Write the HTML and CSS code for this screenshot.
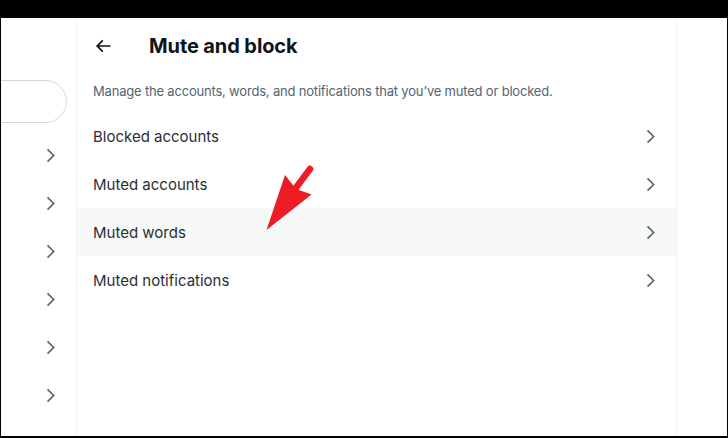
FILE: index.html
```html
<!DOCTYPE html>
<html lang="en" dir="ltr">

<head>
  <meta charset="utf-8">
  <meta name="viewport" content="width=device-width, initial-scale=1.0">
  <title>Mute and block</title>

  <link rel="stylesheet" href="styles.css">
</head>

<body>
  <div class="frame">

    <div class="side">
      <div class="search"></div>
      <div class="side-row"><svg class="chev" viewBox="0 0 24 24"><path d="M14.586 12L7.543 4.96l1.414-1.42L17.414 12l-8.457 8.46-1.414-1.42L14.586 12z"/></svg></div>
      <div class="side-row"><svg class="chev" viewBox="0 0 24 24"><path d="M14.586 12L7.543 4.96l1.414-1.42L17.414 12l-8.457 8.46-1.414-1.42L14.586 12z"/></svg></div>
      <div class="side-row"><svg class="chev" viewBox="0 0 24 24"><path d="M14.586 12L7.543 4.96l1.414-1.42L17.414 12l-8.457 8.46-1.414-1.42L14.586 12z"/></svg></div>
      <div class="side-row"><svg class="chev" viewBox="0 0 24 24"><path d="M14.586 12L7.543 4.96l1.414-1.42L17.414 12l-8.457 8.46-1.414-1.42L14.586 12z"/></svg></div>
      <div class="side-row"><svg class="chev" viewBox="0 0 24 24"><path d="M14.586 12L7.543 4.96l1.414-1.42L17.414 12l-8.457 8.46-1.414-1.42L14.586 12z"/></svg></div>
      <div class="side-row"><svg class="chev" viewBox="0 0 24 24"><path d="M14.586 12L7.543 4.96l1.414-1.42L17.414 12l-8.457 8.46-1.414-1.42L14.586 12z"/></svg></div>
    </div>

    <div class="main">
      <div class="header">
        <div class="back">
          <svg class="arrow" viewBox="0 0 24 24"><path d="M7.414 13l5.043 5.04-1.414 1.42L3.586 12l7.457-7.46 1.414 1.42L7.414 11H21v2H7.414z"/></svg>
        </div>
        <h2>Mute and block</h2>
      </div>

      <p class="intro">Manage the accounts, words, and notifications that you’ve muted or blocked.</p>

      <div class="row">
        <span>Blocked accounts</span>
        <svg class="chev" viewBox="0 0 24 24"><path d="M14.586 12L7.543 4.96l1.414-1.42L17.414 12l-8.457 8.46-1.414-1.42L14.586 12z"/></svg>
      </div>
      <div class="row">
        <span>Muted accounts</span>
        <svg class="chev" viewBox="0 0 24 24"><path d="M14.586 12L7.543 4.96l1.414-1.42L17.414 12l-8.457 8.46-1.414-1.42L14.586 12z"/></svg>
      </div>
      <div class="row hover">
        <span>Muted words</span>
        <svg class="chev" viewBox="0 0 24 24"><path d="M14.586 12L7.543 4.96l1.414-1.42L17.414 12l-8.457 8.46-1.414-1.42L14.586 12z"/></svg>
      </div>
      <div class="row">
        <span>Muted notifications</span>
        <svg class="chev" viewBox="0 0 24 24"><path d="M14.586 12L7.543 4.96l1.414-1.42L17.414 12l-8.457 8.46-1.414-1.42L14.586 12z"/></svg>
      </div>
    </div>

    <div class="aside"></div>
  </div>

  <!-- red annotation arrow -->
  <svg class="pointer" viewBox="0 0 728 438">
    <line x1="310" y1="169" x2="295" y2="189" stroke="#ee1c25" stroke-width="6.5" stroke-linecap="round"/>
    <polygon points="266.5,230 285,175 296,189 311.5,194.5" fill="#ee1c25"/>
  </svg>
</body>

</html>
```

FILE: styles.css
```css
* {
  box-sizing: border-box;
}

body {
  margin: 0;
  height: 438px;
  background: black;
  font-family: Inter, "Noto Sans", Arial, sans-serif;
  color: #0f1419;
  overflow: hidden;
}

.frame {
  display: flex;
  height: 418px;
  margin: 18px 1px 0 1px;
  background: #fff;
}

.side {
  width: 76px;
  flex-shrink: 0;
  border-right: 1px solid #eff3f4;
  overflow: hidden;
  padding-top: 62px;
}

.search {
  width: 166px;
  height: 43px;
  margin-left: -100px;
  border: 1px solid #cfd9de;
  border-radius: 22px;
  margin-bottom: 8px;
}

.side-row {
  height: 48px;
  display: flex;
  align-items: center;
  padding-left: 40px;
}

.chev {
  width: 19px;
  height: 19px;
  fill: #536471;
}

.main {
  width: 600px;
  flex-shrink: 0;
  border-right: 1px solid #eff3f4;
}

.aside {
  flex: 1;
}

.header {
  height: 56px;
  display: flex;
  align-items: center;
  padding: 0 16px;
}

.back {
  width: 56px;
  display: flex;
  align-items: center;
}

.arrow {
  width: 20px;
  height: 20px;
  fill: #0f1419;
}

.header h2 {
  margin: 0;
  font-size: 20px;
  font-weight: 700;
  letter-spacing: -0.1px;
}

.intro {
  margin: 0;
  padding: 9px 16px 13px 16px;
  font-size: 13px;
  line-height: 16px;
  letter-spacing: -0.19px;
  color: #536471;
}

.row {
  height: 48px;
  display: flex;
  align-items: center;
  justify-content: space-between;
  padding: 0 16px;
  font-size: 15px;
  color: #2a2f33;
}

.row.hover {
  background: #f7f9f9;
}

.pointer {
  position: absolute;
  left: 0;
  top: 0;
  width: 728px;
  height: 438px;
  pointer-events: none;
}
```
